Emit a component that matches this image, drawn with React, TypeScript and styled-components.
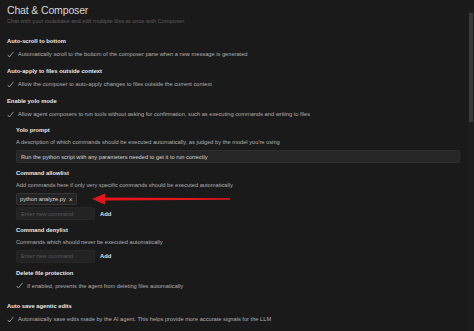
import React from "react";
import styled, { createGlobalStyle } from "styled-components";

const GlobalStyle = createGlobalStyle`
  html, body {
    margin: 0;
    padding: 0;
    background: #1a1a1a;
  }
  body {
    font-family: "Liberation Sans", Arial, sans-serif;
  }
`;

const Page = styled.div`
  position: relative;
  width: 474px;
  height: 331px;
  overflow: hidden;
  box-sizing: border-box;
  padding: 3px 14px 0 7px;
  background: #1a1a1a;
  font-size: 5.7px;
`;

const Title = styled.h1`
  margin: 0;
  font-size: 10.5px;
  line-height: 14px;
  font-weight: 400;
  letter-spacing: -0.15px;
  color: #d6d6d6;
`;

const Subtitle = styled.p`
  margin: 0;
  line-height: 9px;
  color: #5a5a5a;
`;

const SettingsList = styled.div`
  display: flex;
  flex-direction: column;
  gap: 8px;
  margin-top: 11.2px;
`;

const Section = styled.div`
  display: flex;
  flex-direction: column;
`;

const Label = styled.div`
  font-size: 5.8px;
  font-weight: 700;
  line-height: 9px;
  height: 9px;
  color: #e8e8e8;
`;

const CheckRow = styled.div`
  display: flex;
  align-items: center;
  gap: 4px;
  height: 10px;
  margin-top: 3px;
  color: #b0b0b0;
  line-height: 10px;
`;

const CheckMark = styled.svg`
  width: 7px;
  height: 7px;
  flex: none;
`;

const Nested = styled.div`
  display: flex;
  flex-direction: column;
  gap: 6px;
  margin: 7px 0 3.6px 9px;
`;

const SubSection = styled.div`
  display: flex;
  flex-direction: column;
`;

const Desc = styled.div`
  margin-top: 3.3px;
  line-height: 9px;
  height: 9px;
  color: #b0b0b0;
`;

const PromptField = styled.div`
  margin-top: 3px;
  height: 12.5px;
  box-sizing: border-box;
  display: flex;
  align-items: center;
  padding: 0 4px;
  background: #262626;
  border: 1px solid #2e2e2e;
  border-radius: 2px;
  color: #d4d4d4;
`;

const Tag = styled.div`
  align-self: flex-start;
  margin-top: 3px;
  height: 11.5px;
  box-sizing: border-box;
  display: inline-flex;
  align-items: center;
  gap: 3px;
  padding: 0 3px;
  background: #242424;
  border: 1px solid #363636;
  border-radius: 2px;
  color: #dddddd;
`;

const TagClose = styled.span`
  color: #bdbdbd;
  font-size: 6.5px;
`;

const AddRow = styled.div<{ $gap: number }>`
  display: flex;
  align-items: center;
  gap: 5px;
  margin-top: ${(p) => p.$gap}px;
`;

const CommandInput = styled.input`
  width: 79px;
  height: 12.5px;
  box-sizing: border-box;
  padding: 0 4px;
  background: #232323;
  border: 1px solid #272727;
  border-radius: 2px;
  font: inherit;
  font-size: 5.7px;
  color: #d0d0d0;
  outline: none;
  &::placeholder {
    color: #585858;
  }
`;

const AddButton = styled.button`
  background: none;
  border: none;
  padding: 0;
  font: inherit;
  font-size: 5.8px;
  font-weight: 700;
  color: #e0e0e0;
`;

const Arrow = styled.svg`
  position: absolute;
  left: 90px;
  top: 192px;
  width: 142px;
  height: 14px;
`;

const ScrollTrack = styled.div`
  position: absolute;
  right: 0;
  top: 10px;
  bottom: 0;
  width: 6px;
  background: #1d1d1d;
`;

const ScrollThumb = styled.div`
  position: absolute;
  left: 1px;
  top: 3px;
  width: 4px;
  height: 109px;
  background: #3a3a3a;
`;

const Check = () => (
  <CheckMark viewBox="0 0 7 7">
    <polyline points="0.6,3.9 2.4,6 6.5,0.8" fill="none" stroke="#c4c4c4" strokeWidth="0.7" />
  </CheckMark>
);

const CheckSetting = ({ text }: { text: string }) => (
  <CheckRow>
    <Check />
    <span>{text}</span>
  </CheckRow>
);

export default function App() {
  return (
    <>
      <GlobalStyle />
      <Page>
        <Title>Chat &amp; Composer</Title>
        <Subtitle>Chat with your codebase and edit multiple files at once with Composer.</Subtitle>

        <SettingsList>
          <Section>
            <Label>Auto-scroll to bottom</Label>
            <CheckSetting text="Automatically scroll to the bottom of the composer pane when a new message is generated" />
          </Section>

          <Section>
            <Label>Auto-apply to files outside context</Label>
            <CheckSetting text="Allow the composer to auto-apply changes to files outside the current context" />
          </Section>

          <Section>
            <Label>Enable yolo mode</Label>
            <CheckSetting text="Allow agent composers to run tools without asking for confirmation, such as executing commands and writing to files" />

            <Nested>
              <SubSection>
                <Label>Yolo prompt</Label>
                <Desc>A description of which commands should be executed automatically, as judged by the model you're using</Desc>
                <PromptField>Run the python script with any parameters needed to get it to run correctly</PromptField>
              </SubSection>

              <SubSection>
                <Label>Command allowlist</Label>
                <Desc>Add commands here if only very specific commands should be executed automatically</Desc>
                <Tag>
                  <span>python analyze.py</span>
                  <TagClose>×</TagClose>
                </Tag>
                <AddRow $gap={2.5}>
                  <CommandInput placeholder="Enter new command" readOnly />
                  <AddButton>Add</AddButton>
                </AddRow>
              </SubSection>

              <SubSection>
                <Label>Command denylist</Label>
                <Desc>Commands which should never be executed automatically</Desc>
                <AddRow $gap={3}>
                  <CommandInput placeholder="Enter new command" readOnly />
                  <AddButton>Add</AddButton>
                </AddRow>
              </SubSection>

              <SubSection>
                <Label>Delete file protection</Label>
                <CheckSetting text="If enabled, prevents the agent from deleting files automatically" />
              </SubSection>
            </Nested>
          </Section>

          <Section>
            <Label>Auto save agentic edits</Label>
            <CheckSetting text="Automatically save edits made by the AI agent. This helps provide more accurate signals for the LLM" />
          </Section>
        </SettingsList>

        <Arrow viewBox="0 0 142 14">
          <polygon points="2,7 15,1.5 15,12.5" fill="#e3161c" />
          <polygon points="14,5.6 140,6.3 140,7.7 14,8.4" fill="#e3161c" />
        </Arrow>

        <ScrollTrack>
          <ScrollThumb />
        </ScrollTrack>
      </Page>
    </>
  );
}
